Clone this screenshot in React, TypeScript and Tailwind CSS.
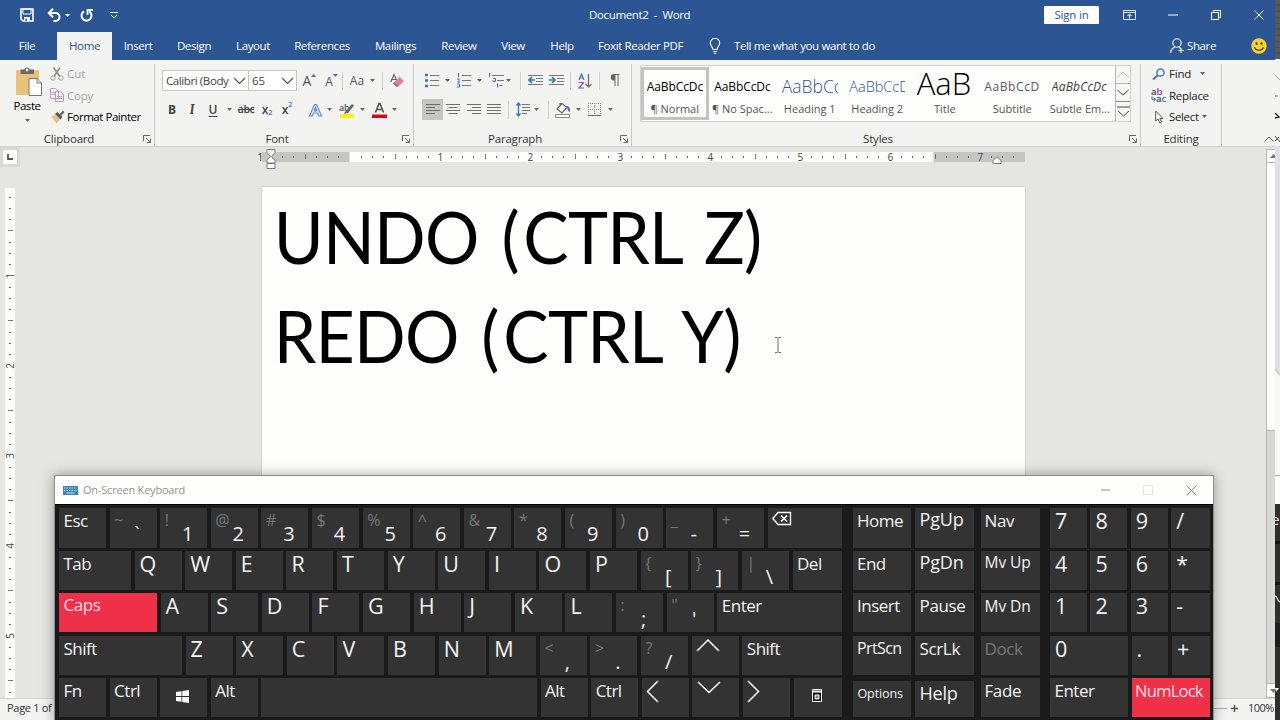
import type { ReactNode } from 'react';

type IconProps = { w: number; h: number; children: ReactNode; className?: string };

function Icon({ w, h, children, className = '' }: IconProps) {
    return (
        <svg
            width={w}
            height={h}
            viewBox={`0 0 ${w} ${h}`}
            fill="none"
            className={`shrink-0 ${className}`}
        >
            {children}
        </svg>
    );
}

function Cell({ className, children }: { className: string; children?: ReactNode }) {
    return (
        <div className={`flex shrink-0 items-center justify-center ${className}`}>
            {children}
        </div>
    );
}

function Caret({ className = '' }: { className?: string }) {
    return (
        <Icon w={5} h={3} className={className}>
            <path d="M0 0h5L2.5 3z" fill="#666" />
        </Icon>
    );
}

function Divider({ className = 'h-[18px]' }: { className?: string }) {
    return <div className={`w-px shrink-0 bg-[#cfcfcd] ${className}`} />;
}

function TitleBar() {
    return (
        <div className="flex h-8 items-center pb-[2px] text-white">
            <Cell className="ml-[19px] w-[16px]">
                <Icon w={14} h={14}>
                    <path d="M1 1h12v12H3l-2-2z" stroke="#fff" strokeWidth="1.600" />
                    <path d="M3 1h8v5H3z" stroke="#fff" strokeWidth="1" />
                    <path d="M4 9h6v4H4z" fill="#fff" />
                    <path d="M5.500 10.500h1.500V13H5.500z" fill="#2c5594" />
                </Icon>
            </Cell>
            <Cell className="ml-[12px] w-[14px]">
                <Icon w={14} h={14}>
                    <path d="M2 5h6.500a4 4 0 0 1 0 8H6.500" stroke="#fff" strokeWidth="2" />
                    <path d="M6 .8L1.800 5 6 9.200" stroke="#fff" strokeWidth="2" />
                </Icon>
            </Cell>
            <Icon w={5} h={3} className="ml-1">
                <path d="M0 0h5L2.500 3z" fill="#fff" />
            </Icon>
            <Cell className="ml-[10px] w-[13px]">
                <Icon w={13} h={14}>
                    <path d="M4 3.300A5 5 0 1 0 9 3.300" stroke="#fff" strokeWidth="2" />
                    <path d="M7.500 7V2H13" stroke="#fff" strokeWidth="1.800" />
                </Icon>
            </Cell>
            <Icon w={8} h={7} className="ml-[17px]">
                <path d="M0 .5h8M1 3l3 3 3-3" stroke="#fff" />
            </Icon>
            <div className="ml-[471px] w-[103px] text-[11.500px] tracking-[-0.350px] whitespace-pre">
                Document2  -  Word
            </div>
            <div className="ml-[352px] flex h-[18px] w-[55px] items-center justify-center rounded-[1px] bg-white text-[11.500px] tracking-[-0.200px] text-[#2c5594]">
                Sign in
            </div>
            <Icon w={13} h={10} className="ml-6">
                <path d="M.5.5h12v9H.500zM.5 2.500h12" stroke="#dfe7f3" />
                <path d="M6.500 8.500V4M4.500 6l2-2 2 2" stroke="#fff" />
            </Icon>
            <Icon w={10} h={2} className="ml-[32px]">
                <path d="M0 1h10" stroke="#fff" />
            </Icon>
            <Icon w={10} h={10} className="ml-[33px]">
                <path d="M.5 2.500h7v7h-7zM2.500 2.500v-2h7v7h-2" stroke="#fff" />
            </Icon>
            <Icon w={10} h={10} className="ml-[33px]">
                <path d="M.5.5l9 9M9.500.5l-9 9" stroke="#fff" />
            </Icon>
        </div>
    );
}

const tabs = [
    { label: 'File', width: 'w-[57px] pr-[3px]' },
    { label: 'Home', width: 'w-[55px]' },
    { label: 'Insert', width: 'w-[52px]' },
    { label: 'Design', width: 'w-[60px]' },
    { label: 'Layout', width: 'w-[58px]' },
    { label: 'References', width: 'w-[80px]' },
    { label: 'Mailings', width: 'w-[67px]' },
    { label: 'Review', width: 'w-[60px]' },
    { label: 'View', width: 'w-[48px]' },
    { label: 'Help', width: 'w-[50px]' },
    { label: 'Foxit Reader PDF', width: 'w-[107px]' },
];

function TabBar() {
    return (
        <div className="flex h-7 text-[11.500px] tracking-[-0.380px] text-white">
            {tabs.map((tab) => (
                <Cell
                    key={tab.label}
                    className={`pb-px whitespace-nowrap ${tab.width} ${
                        tab.label === 'Home' ? 'bg-[#f3f3f1] text-[#2c5594]' : ''
                    }`}
                >
                    {tab.label}
                </Cell>
            ))}
            <Cell className="ml-[14px] w-[14px]">
                <Icon w={12} h={16}>
                    <path
                        d="M4 11.500C4 9 1.300 8 1.300 5a4.700 4.700 0 0 1 9.400 0c0 3-2.700 4-2.700 6.500zM4.300 13.500h3.400M4.800 15.300h2.400"
                        stroke="#fff"
                        strokeWidth="1.100"
                    />
                </Icon>
            </Cell>
            <div className="ml-[12px] flex w-[150px] items-center pb-px whitespace-nowrap">
                Tell me what you want to do
            </div>
            <Cell className="ml-[285px] w-[17px]">
                <Icon w={15} h={16}>
                    <circle cx="7" cy="5" r="4.200" stroke="#fff" strokeWidth="1.100" />
                    <path
                        d="M.6 15c0-3.500 2-5 4.400-6M9 9l1.500 1.500M11 10v5M8.500 12.500h5"
                        stroke="#fff"
                        strokeWidth="1.100"
                    />
                </Icon>
            </Cell>
            <div className="flex w-[65px] items-center pb-px pl-px">Share</div>
            <Cell className="w-[16px] pb-px">
                <Icon w={16} h={16}>
                    <circle cx="8" cy="8" r="7.700" fill="#f7d22d" />
                    <ellipse cx="5.500" cy="5.500" rx="1" ry="1.600" fill="#4b3f16" />
                    <ellipse cx="10.500" cy="5.500" rx="1" ry="1.600" fill="#4b3f16" />
                    <path d="M3.500 9.200c1.500 4 7.500 4 9 0" stroke="#4b3f16" strokeWidth="1.100" />
                </Icon>
            </Cell>
        </div>
    );
}

type GroupProps = {
    label: string;
    className: string;
    launcher?: boolean;
    labelClass?: string;
    children: ReactNode;
};

function Group({ label, className, launcher = true, labelClass = '', children }: GroupProps) {
    return (
        <div className={`flex shrink-0 flex-col ${className}`}>
            <div className="flex flex-1">
                <div className="flex-1">{children}</div>
                <div className="mt-1 h-[68px] w-px bg-[#c9c9c7]" />
            </div>
            <div className="flex h-[14px] items-center border-r border-[#c9c9c7]">
                <div className={`flex-1 text-center tracking-[-0.200px] text-[#333] ${labelClass}`}>{label}</div>
                {launcher && (
                    <Icon w={8} h={8} className="mr-[3px]">
                        <path d="M.5 6V.5H7M3 3l4 4M7.500 3.500v4h-4" stroke="#666" />
                    </Icon>
                )}
            </div>
        </div>
    );
}

function Clipboard() {
    return (
        <Group label="Clipboard" className="w-[155px]" labelClass="pr-[5px]">
            <div className="flex">
                <div className="flex w-[50px] flex-col items-center pt-[7px] pl-[4px] text-black">
                    <Icon w={27} h={29} className="ml-[3px]">
                        <rect x="1" y="3" width="23" height="25" rx="1" fill="#e8c37a" />
                        <path d="M5.500 2.500H9a3.200 3.200 0 0 1 6 0h4V7h-13.500z" fill="#6b6b6b" />
                        <circle cx="12" cy="3" r="1.400" fill="#f3f3f1" />
                        <path d="M14 11.500h8l4.500 4.500v12.500H14z" fill="#fff" stroke="#777" />
                        <path d="M22 11.500V16h4.500" stroke="#777" />
                    </Icon>
                    <span className="mt-[1px] tracking-[-0.450px]">Paste</span>
                    <Caret className="mt-[5px]" />
                </div>
                <div className="flex flex-col pt-[3px]">
                    <div className="flex h-[21.500px] items-center text-[#a6a6a6]">
                        <Icon w={14} h={14} className="mr-[3px]">
                            <path d="M3.500.5l6.500 9M10 .5l-6 9" stroke="#8f8f8f" strokeWidth="1.700" />
                            <circle cx="3" cy="11" r="2.200" stroke="#a0a0a0" />
                            <circle cx="11" cy="11" r="2.200" stroke="#a0a0a0" />
                        </Icon>
                        Cut
                    </div>
                    <div className="flex h-[21.500px] items-center tracking-[-0.200px] text-[#a6a6a6]">
                        <Icon w={14} h={14} className="mr-[3px]">
                            <path d="M.5.5h5l3 3v7h-8zM5.500 3.500h5l3 3v7h-8z" fill="#f6f1f6" stroke="#b79fba" />
                            <path d="M2 4.500h3M2 6.500h3M7 8.500h5M7 10.500h5" stroke="#b79fba" />
                        </Icon>
                        Copy
                    </div>
                    <div className="flex h-[21.500px] items-center tracking-[-0.460px] text-black">
                        <Icon w={15} h={14} className="mr-[2px]">
                            <path d="M1 6l4-1 5 4-3.500 4.500z" fill="#ebbf83" />
                            <path d="M5 4l2.500-2 5 5-2 2.500z" fill="#555" />
                            <path d="M9.500 4L13 .8l1.500 1.500L11 6z" fill="#666" />
                        </Icon>
                        Format Painter
                    </div>
                </div>
            </div>
        </Group>
    );
}

function Combo({ value, className }: { value: string; className: string }) {
    return (
        <div
            className={`flex h-[21px] items-center justify-between overflow-hidden border border-[#c6c6c6] bg-white pr-0.5 pl-[3px] whitespace-nowrap text-[#444] ${className}`}
        >
            {value}
            <Icon w={13} h={8}>
                <path d="M1 1l5.500 5.500L12 1" stroke="#555" strokeWidth="1.200" />
            </Icon>
        </div>
    );
}

function FontGroup() {
    return (
        <Group label="Font" className="w-[259px]" labelClass="pr-[3px]">
            <div className="mt-[10px] flex h-[21px] items-center pl-[7px] text-[#555]">
                <Combo value="Calibri (Body" className="w-[87px] tracking-[-0.400px]" />
                <Combo value="65" className="-ml-px w-[49px]" />
                <Cell className="w-[24px] pl-px">
                    <span className="text-[14px]">A</span>
                    <Icon w={5} h={3} className="mb-[10px]">
                        <path d="M0 3h5L2.500 0z" fill="#3f6fb0" />
                    </Icon>
                </Cell>
                <Cell className="w-[21px]">
                    <span className="pt-0.5 text-[12px]">A</span>
                    <Icon w={5} h={3} className="mb-[10px]">
                        <path d="M0 0h5L2.500 3z" fill="#3f6fb0" />
                    </Icon>
                </Cell>
                <Divider />
                <Cell className="w-[39px] gap-1.5">
                    <span className="text-[12px]">Aa</span>
                    <Caret />
                </Cell>
                <Divider />
                <Cell className="w-[29px]">
                    <Icon w={15} h={15}>
                        <path d="M.8 9L4 1.500 7 8M2 6.500h4" stroke="#666" strokeWidth="1.200" />
                        <path d="M9.500 4l4.500 4-5 5-4.500-4z" fill="#e07f9c" />
                        <path d="M4.500 9L9 13l-2 1-4-3.500z" fill="#8b6a86" />
                    </Icon>
                </Cell>
            </div>
            <div className="mt-[8px] flex h-[21px] items-center pl-[7px] text-[12px] font-semibold text-[#444]">
                <Cell className="w-5 font-bold">B</Cell>
                <Cell className="w-5 font-serif text-[13px] italic">I</Cell>
                <Cell className="w-[22px] underline underline-offset-2">U</Cell>
                <Cell className="w-[11px]"><Caret /></Cell>
                <Cell className="w-[22px] text-[10.500px] tracking-[-0.5px] line-through">abc</Cell>
                <Cell className="w-[20px]">
                    x<span className="mt-[7px] text-[7px] text-[#3f6fb0]">2</span>
                </Cell>
                <Cell className="w-[20px]">
                    x<span className="mb-[8px] text-[7px] text-[#3f6fb0]">2</span>
                </Cell>
                <Divider className="ml-[4px]" />
                <Cell className="w-[25px] pl-[2px]">
                    <Icon w={15} h={14}>
                        <path
                            d="M1.500 13L6.500 1.500h2l5 11.500h-2.800L9.600 10H5.400L4.300 13zM6.300 7.800h2.500L7.500 4.500z"
                            fill="#eef4fb"
                            stroke="#5f8fcb"
                            strokeWidth="1.200"
                        />
                    </Icon>
                </Cell>
                <Caret />
                <Cell className="w-[28px] pl-[2px]">
                    <Icon w={16} h={16}>
                        <text x="0" y="8.500" fontSize="9" letterSpacing="-0.3" fill="#555">ab</text>
                        <path d="M6 10l7-8 2 1.500-6 7.500-4 1z" fill="#666" />
                        <path d="M1 12h14v4H1z" fill="#fff200" />
                    </Icon>
                </Cell>
                <Caret />
                <Cell className="w-[27px] pl-px">
                    <Icon w={15} h={16}>
                        <path d="M3.500 10.500L7 1.500h1l3.500 9M5 7.500h5" stroke="#555" strokeWidth="1.600" />
                        <path d="M0 12.500h15v3.500H0z" fill="#c90c16" />
                    </Icon>
                </Cell>
                <Caret />
            </div>
        </Group>
    );
}

function Lines({ d }: { d: string }) {
    return (
        <Icon w={14} h={11}>
            <path d={d} stroke="#6d6d6d" />
        </Icon>
    );
}

function ParagraphGroup() {
    return (
        <Group label="Paragraph" className="w-[218px]" labelClass="pr-[4px]">
            <div className="mt-[10px] flex h-[21px] items-center pl-[11px]">
                <Icon w={14} h={15}>
                    <path d="M0 2h3M0 7.500h3M0 13h3" stroke="#3f6fb0" strokeWidth="2.500" />
                    <path d="M5 2.500h9M5 7.500h9M5 12.500h9" stroke="#777" />
                </Icon>
                <Caret className="ml-[6px]" />
                <Icon w={14} h={15} className="ml-[7px]">
                    <path d="M1.500 0v4M0 6h2v1.500L.5 9H3M0 11h2.500v3H0" stroke="#3f6fb0" />
                    <path d="M5 2.500h9M5 7.500h9M5 12.500h9" stroke="#777" />
                </Icon>
                <Caret className="ml-[6px]" />
                <Icon w={17} h={15} className="ml-[6px]">
                    <path d="M1.500 0v4M5 5.500h2.500v3H5v-1.500M9.500 10.500v4" stroke="#3f6fb0" />
                    <path d="M4 2.500h12M9 7.500h7M11.500 12.500h3" stroke="#777" />
                </Icon>
                <Caret className="ml-px" />
                <Divider className="ml-[9px] h-[18px]" />
                <Cell className="w-[28px]">
                    <Icon w={15} h={13}>
                        <path d="M0 1.500h15M8 4.500h7M8 7.500h7M0 10.500h15" stroke="#777" />
                        <path d="M7 6H1.500M4 3L1 6l3 3" stroke="#3f6fb0" strokeWidth="1.700" />
                    </Icon>
                </Cell>
                <Cell className="w-[14px]">
                    <Icon w={15} h={13}>
                        <path d="M0 1.500h15M8 4.500h7M8 7.500h7M0 10.500h15" stroke="#777" />
                        <path d="M0 6h5.500M3 3l3 3-3 3" stroke="#3f6fb0" strokeWidth="1.700" />
                    </Icon>
                </Cell>
                <Divider className="ml-[7px] h-[18px]" />
                <Cell className="w-[28px]">
                    <Icon w={14} h={16}>
                        <path d="M1 7l2.500-6L6 7M2 5h3" stroke="#3f6fb0" strokeWidth="1.200" />
                        <path d="M1 9.500h4.500L1 15h5" stroke="#9350a8" strokeWidth="1.200" />
                        <path d="M10.500 1v13M7.500 11l3 3 3-3" stroke="#666" strokeWidth="1.200" />
                    </Icon>
                </Cell>
                <Divider />
                <Cell className="w-[29px]">
                    <Icon w={10} h={13}>
                        <path d="M4 .5h5.500M5 0v12M8 0v12" stroke="#666" />
                        <path d="M5 0H4a3.300 3.300 0 0 0 0 6.600h1z" fill="#666" />
                    </Icon>
                </Cell>
            </div>
            <div className="mt-[8px] flex h-[21px] items-center pl-[8px]">
                <Cell className="h-[21px] w-[21px] bg-[#c5c5c3]">
                    <Lines d="M0 .5h14M0 3.500h9M0 6.500h14M0 9.500h9" />
                </Cell>
                <Cell className="w-[20px]">
                    <Lines d="M0 .5h14M2.500 3.500h9M0 6.500h14M2.500 9.500h9" />
                </Cell>
                <Cell className="w-[21px]">
                    <Lines d="M0 .5h14M5 3.500h9M0 6.500h14M5 9.500h9" />
                </Cell>
                <Cell className="w-[20px]">
                    <Lines d="M0 .5h14M0 3.500h14M0 6.500h14M0 9.500h14" />
                </Cell>
                <Divider className="ml-[4px] h-[18px]" />
                <Icon w={14} h={15} className="ml-[7px]">
                    <path d="M2.500 1v13M.5 3.500l2-2.500 2 2.500M.5 11.500l2 2.500 2-2.500" stroke="#3f6fb0" strokeWidth="1.300" />
                    <path d="M6 2.500h8M6 5.500h8M6 8.500h8M6 11.500h5" stroke="#777" />
                </Icon>
                <Caret className="ml-[4px]" />
                <Divider className="ml-[9px] h-[18px]" />
                <Icon w={16} h={16} className="ml-[6px]">
                    <path d="M7 1.500L2 7l5 4 5-5.500zM5 4V1.500h2.500" stroke="#666" strokeWidth="1.200" />
                    <path d="M11 4c3 0 4.500 2 4 6-1.500 0-2-1.500-2.500-3.500z" fill="#3f6fb0" />
                    <path d="M.5 12.500h14v3H.500z" fill="#fff" stroke="#888" />
                </Icon>
                <Caret className="ml-[5px]" />
                <Icon w={13} h={13} className="ml-[7px]">
                    <path d="M.5 0v12M6.500 0v12M12.500 0v12M0 .5h13M0 6.500h13" stroke="#888" strokeDasharray="1 1" />
                    <path d="M0 12.500h13" stroke="#666" />
                </Icon>
                <Caret className="ml-[7px]" />
            </div>
        </Group>
    );
}

const styleCards = [
    { name: '¶ Normal', sample: 'text-[12px] tracking-[-0.100px] text-black' },
    { name: '¶ No Spac...', sample: 'text-[12px] tracking-[-0.100px] text-black' },
    { name: 'Heading 1', sample: 'text-[17.500px] font-light text-[#2f5496]' },
    { name: 'Heading 2', sample: 'text-[14.500px] font-light text-[#2f5496]' },
    { name: 'Title', sample: 'text-[31px] font-light leading-none pb-[7px] text-black' },
    { name: 'Subtitle', sample: 'text-[12px] tracking-[0.600px] text-[#5a5a5a]' },
    { name: 'Subtle Em...', sample: 'text-[12px] italic tracking-[0.200px] text-[#404040]' },
];

function StylesGroup() {
    return (
        <Group label="Styles" className="w-[509px]" labelClass="pr-[5px]">
            <div className="mt-[5px] ml-[8px] flex h-[57px] w-[491px] border border-[#d2d2d0] bg-[#fdfdfb]">
                {styleCards.map((card, i) => (
                    <div
                        key={card.name}
                        className={`flex w-[67.500px] shrink-0 flex-col items-center ${
                            i === 0 ? 'mt-[1px] h-[53px] border-[3px] border-[#c3c3c1]' : 'pt-[4px]'
                        }`}
                    >
                        <div
                            className={`flex h-[33px] w-[56px] items-center overflow-hidden whitespace-nowrap ${card.sample}`}
                        >
                            {card.name === 'Title' ? 'AaB' : 'AaBbCcDc'}
                        </div>
                        <div className="mt-[-2px] text-[11px] leading-[16px] whitespace-nowrap text-[#555]">
                            {card.name}
                        </div>
                    </div>
                ))}
                <div className="ml-auto flex w-[15px] shrink-0 flex-col border-l border-[#b5b5b3] bg-[#f6f6f4]">
                    <Cell className="h-[18px] border-b border-[#b5b5b3]">
                        <Icon w={12} h={7}><path d="M.5 6L6 1l5.500 5" stroke="#c0c0c0" /></Icon>
                    </Cell>
                    <Cell className="h-[18px] border-b border-[#888]">
                        <Icon w={12} h={7}><path d="M.5 1L6 6l5.500-5" stroke="#444" /></Icon>
                    </Cell>
                    <Cell className="flex-1">
                        <Icon w={13} h={12}>
                            <path d="M0 1h13M1 5l5.500 5L12 5" stroke="#444" />
                        </Icon>
                    </Cell>
                </div>
            </div>
        </Group>
    );
}

function EditingGroup() {
    return (
        <Group label="Editing" className="w-[81px]" launcher={false}>
            <div className="flex flex-col pt-[3px] pl-[10px] text-[#222]">
                <div className="flex h-[21.500px] items-center tracking-[-0.200px]">
                    <Icon w={13} h={12} className="mr-[4px] ml-px">
                        <circle cx="8.500" cy="4.500" r="3.600" stroke="#4a78b5" strokeWidth="1.500" />
                        <path d="M6 7L1 11.500" stroke="#4a78b5" strokeWidth="2.200" />
                    </Icon>
                    Find
                    <Caret className="ml-[9px]" />
                </div>
                <div className="flex h-[21.500px] items-center">
                    <Icon w={16} h={17} className="mr-[2px]">
                        <text x="0" y="8" fontSize="9.500" fontWeight="600" fill="#444">a</text>
                        <text x="5.500" y="8" fontSize="9.500" fontWeight="600" fill="#8a4aa0">b</text>
                        <text x="5" y="15" fontSize="9.500" fontWeight="600" fill="#444">a</text>
                        <text x="10.500" y="15" fontSize="9.500" fontWeight="600" fill="#3f6fb0">c</text>
                        <path d="M1 9.500v3h3M2.500 10.500l2 2-2 2" stroke="#3f6fb0" />
                    </Icon>
                    <span className="tracking-[-0.300px]">Replace</span>
                </div>
                <div className="flex h-[21.500px] items-center">
                    <Icon w={9} h={14} className="mr-[5px] ml-[4px]">
                        <path d="M.7 1v10l2.300-2 1.800 4 1.700-.800L4.800 8.500H8z" fill="#fff" stroke="#555" />
                    </Icon>
                    <span className="tracking-[-0.350px]">Select</span>
                    <Caret className="ml-[3px]" />
                </div>
            </div>
        </Group>
    );
}

function Ribbon() {
    return (
        <div className="flex h-[87px] border-b border-[#d2d2d0] bg-[#f3f3f1] pb-[1px] text-[11.500px]">
            <Clipboard />
            <FontGroup />
            <ParagraphGroup />
            <StylesGroup />
            <EditingGroup />
            <Icon w={10} h={6} className="mb-[3px] ml-[42px] self-end">
                <path d="M.5 5.500L5 1l4.500 4.500" stroke="#555" />
            </Icon>
        </div>
    );
}

// Eighth-inch marks: whole inches carry a number, half inches a longer stroke.
function Mark({ step, vertical = false }: { step: number; vertical?: boolean }) {
    if (step % 8 === 0) {
        if (step === 0) return null;
        return (
            <span className={`text-[10px] leading-none text-[#444] ${vertical ? '-rotate-90' : ''}`}>
                {Math.abs(step / 8)}
            </span>
        );
    }
    if (step % 4 === 0) {
        return <span className={`bg-[#777] ${vertical ? 'h-px w-[5px]' : 'h-[5px] w-px'}`} />;
    }
    return <span className={`bg-[#666] ${vertical ? 'h-px w-[2px]' : 'h-[1.500px] w-px'}`} />;
}

function HorizontalRuler() {
    const steps = Array.from({ length: 68 }, (_, i) => i - 8);
    return (
        <div className="relative ml-[262px] h-[9.500px] w-[763px] bg-[linear-gradient(to_right,#c5c5c3_87px,#fdfdfb_88px,#fdfdfb_671px,#c5c5c3_672px)]">
            <div className="-ml-[7.400px] flex h-full">
                {steps.map((step) => (
                    <Cell key={step} className="w-[11.250px]">
                        <Mark step={step} />
                    </Cell>
                ))}
            </div>
            <svg width="10" height="21" viewBox="0 0 10 21" className="absolute -top-[3px] left-[4px]">
                <path
                    d="M1 .5h8v3L5.500 7.500 9 11v3H1v-3l3.500-3.500L1 3.500zM1 14.500h8v5H1z"
                    fill="#fff"
                    stroke="#777"
                />
            </svg>
            <svg width="10" height="8" viewBox="0 0 10 8" className="absolute top-[4px] left-[730px]">
                <path d="M5 .7l4 3.800v3H1v-3z" fill="#fff" stroke="#777" />
            </svg>
        </div>
    );
}

function VerticalRuler() {
    const steps = Array.from({ length: 45 }, (_, i) => i + 1);
    return (
        <div className="mt-[21px] ml-[5px] flex h-[511px] w-[10px] flex-col overflow-hidden bg-[#fdfdfb] pt-[3.500px]">
            {steps.map((step) => (
                <Cell key={step} className="h-[11.250px]">
                    <Mark step={step} vertical />
                </Cell>
            ))}
        </div>
    );
}

function ScrollBar() {
    return (
        <div className="mt-[2px] flex h-[549px] w-[14px] flex-col border-l border-[#b5b5b3] bg-[#d8d9d6]">
            <div className="flex h-[14px] items-center border-y border-[#b5b5b3] bg-white pl-[3px]">
                <Icon w={7} h={4}><path d="M0 4h7L3.500 0z" fill="#777" /></Icon>
            </div>
            <div className="h-[268px] border-b border-[#b5b5b3] bg-white" />
            <div className="mt-auto flex h-[15px] items-center border-y border-[#b5b5b3] bg-white pl-[3px]">
                <Icon w={7} h={4}><path d="M0 0h7L3.500 4z" fill="#777" /></Icon>
            </div>
        </div>
    );
}

// The opening bracket needs extra room after it.
function Heading({ word, keys }: { word: string; keys: string }) {
    return (
        <p className="w-[500px] origin-left scale-x-[0.95] pl-[5px] leading-[104px] whitespace-nowrap">
            {word} <span className="tracking-[4px]">(</span>
            {keys})
        </p>
    );
}

function Workspace() {
    return (
        <div className="flex h-[551px] bg-[#e5e6e2]">
            <div className="flex w-[20px] shrink-0 flex-col">
                <div className="flex h-[20px] w-[20px] items-center justify-center bg-[#d8d9d6]">
                    <div className="flex h-[14px] w-[14px] items-center justify-center bg-[#fdfdfb]">
                        <Icon w={6} h={6}><path d="M1 0v5h5" stroke="#555" strokeWidth="1.800" /></Icon>
                    </div>
                </div>
                <VerticalRuler />
            </div>
            <div className="-ml-[20px] w-[1266px] shrink-0 pt-[5px]">
                <HorizontalRuler />
                <div className="mt-[24.500px] ml-[261px] h-[512px] w-[765px] border border-[#d2d3d0] bg-[#fefefc] font-['Lato',sans-serif] text-black">
                    <div className="-mt-[3px] pl-[7px] text-[71.500px] tracking-[-0.800px] [word-spacing:6.500px]">
                        <div className="h-[99px]">
                            <Heading word="UNDO" keys="CTRL Z" />
                        </div>
                        <div className="flex h-[99px]">
                            <Heading word="REDO" keys="CTRL Y" />
                            <Icon w={8} h={16} className="mt-[54px] ml-[5px]">
                                <path d="M1 .5h2.500M4.500.5H7M4 1v14M1 15.500h2.500M4.500 15.500H7" stroke="#666" />
                            </Icon>
                        </div>
                    </div>
                </div>
            </div>
            <ScrollBar />
        </div>
    );
}

function StatusBar() {
    return (
        <div className="flex h-[22px] items-center border-t border-[#d2d2d0] bg-[#f3f3f1] pb-[2px] text-[11px] tracking-[-0.300px] text-[#333]">
            <span className="ml-[7px] w-[1206px] whitespace-nowrap">Page 1 of</span>
            <div className="h-px w-[14px] bg-[#aaa]" />
            <Icon w={7} h={7} className="ml-[4px]"><path d="M0 3.500h7M3.500 0v7" stroke="#555" strokeWidth="1.500" /></Icon>
            <span className="ml-[10px] tracking-[-0.500px]">100%</span>
        </div>
    );
}

type KeyProps = {
    label?: ReactNode;
    shift?: string;
    w?: string;
    size?: string;
    active?: boolean;
    dim?: boolean;
};

function Key({ label, shift, w = 'w-[47px]', size = 'text-[17px] tracking-[-0.500px]', active, dim }: KeyProps) {
    return (
        <div
            className={`flex h-full shrink-0 pl-[4.500px] leading-[25px] whitespace-nowrap ${w} ${
                active ? 'bg-[#ee3048] text-[#ffdfe3]' : 'bg-[#333]'
            } ${dim ? 'text-[#777]' : ''}`}
        >
            {shift && <span className="w-[16px] text-[16px] text-[#777]">{shift}</span>}
            <span className={shift ? 'mt-[13px] w-[14px] text-center text-[20px]' : size}>{label}</span>
        </div>
    );
}

const letter = 'pl-[0.500px] text-[21.500px]';

function Letters({ text }: { text: string }) {
    return (
        <>
            {text.split('').map((ch) => (
                <Key key={ch} label={ch} size={letter} />
            ))}
        </>
    );
}

function KeyRow({ children, className = 'h-[39px]' }: { children: ReactNode; className?: string }) {
    return <div className={`flex gap-[3.620px] ${className}`}>{children}</div>;
}

function Chevron({ d }: { d: string }) {
    return (
        <Icon w={24} h={24} className="mt-[2px]">
            <path d={d} stroke="#fff" strokeWidth="1.500" />
        </Icon>
    );
}

const numberRow = ['~`', '!1', '@2', '#3', '$4', '%5', '^6', '&7', '*8', '(9', ')0', '_-', '+='];

function MainKeys() {
    return (
        <div className="flex w-[783px] flex-col gap-[3.400px]">
            <KeyRow className="h-[39.500px]">
                <Key label="Esc" />
                {numberRow.map((k) => (
                    <Key key={k} shift={k[0]} label={k[1]} />
                ))}
                <Key
                    w="flex-1"
                    label={
                        <Icon w={20} h={15} className="mt-[3px]">
                            <path d="M6 1.500h12.500v12H6L.8 7.500z" stroke="#fff" strokeWidth="1.400" />
                            <path d="M9 4.500l6 6M15 4.500l-6 6" stroke="#fff" strokeWidth="1.700" />
                        </Icon>
                    }
                />
            </KeyRow>
            <KeyRow>
                <Key label="Tab" w="w-[72px]" />
                <Letters text="QWERTYUIOP" />
                <Key shift="{" label="[" />
                <Key shift="}" label="]" />
                <Key shift="|" label="\" />
                <Key label="Del" w="flex-1" />
            </KeyRow>
            <KeyRow>
                <Key label="Caps" w="w-[98px]" size="text-[17px] leading-[23px] tracking-[-0.400px]" active />
                <Letters text="ASDFGHJKL" />
                <Key shift=":" label=";" />
                <Key shift={'"'} label="'" />
                <Key label="Enter" w="flex-1" />
            </KeyRow>
            <KeyRow>
                <Key label="Shift" w="w-[123px]" />
                <Letters text="ZXCVBNM" />
                <Key shift="<" label="," />
                <Key shift=">" label="." />
                <Key shift="?" label="/" />
                <Key label={<Chevron d="M1 13L12 2l11 11" />} />
                <Key label="Shift" w="flex-1" />
            </KeyRow>
            <KeyRow>
                <Key label="Fn" />
                <Key label="Ctrl" />
                <Key
                    label={
                        <Icon w={13} h={13} className="mt-[12px] ml-[11px]">
                            <path d="M0 2l5.500-.800V6H0zM6.300 1L13 0v6H6.300zM0 7h5.500v4.800L0 11zM6.300 7H13v6l-6.700-1z" fill="#fff" />
                        </Icon>
                    }
                />
                <Key label="Alt" />
                <Key w="w-[275.500px]" />
                <Key label="Alt" />
                <Key label="Ctrl" />
                <Key label={<Chevron d="M12 1L1.500 11.500 12 22" />} />
                <Key label={<Chevron d="M1 2l11 10.500L23 2" />} />
                <Key label={<Chevron d="M1 1l10.500 10.500L1 22" />} />
                <Key
                    w="flex-1"
                    label={
                        <Icon w={10} h={13} className="mt-[11px] ml-[14px]">
                            <path d="M.5.5h9v12h-9z" fill="#111" stroke="#fff" />
                            <path d="M0 2.500h10" stroke="#fff" strokeWidth="2" />
                            <path d="M3 6h4v4H3z" fill="#888" stroke="#fff" />
                        </Icon>
                    }
                />
            </KeyRow>
        </div>
    );
}

const navRows = [
    ['Home', 'PgUp'],
    ['End', 'PgDn'],
    ['Insert', 'Pause'],
    ['PrtScn', 'ScrLk'],
];

function NavKeys() {
    return (
        <div className="ml-[11px] flex w-[120.500px] flex-col gap-[3.400px]">
            {navRows.map(([a, b], i) => (
                <KeyRow key={a} className={i === 0 ? 'h-[39.500px]' : 'h-[39px]'}>
                    <Key
                        label={a}
                        w="flex-1"
                        size={a === 'PrtScn' ? '-ml-[0.500px] text-[16px] tracking-[-0.600px]' : '-ml-[0.500px] text-[17px] tracking-[-0.500px]'}
                    />
                    <Key
                        label={b}
                        w="w-[58.500px]"
                        size={i < 2 ? 'text-[18px] leading-[23px] tracking-[-0.150px]' : 'text-[17px] tracking-[-0.350px]'}
                    />
                </KeyRow>
            ))}
            <KeyRow className="h-[39px] pt-[3px]">
                <Key label="Options" w="flex-1" size="text-[12.500px] tracking-[-0.100px]" />
                <Key label="Help" w="w-[58.500px]" size="text-[18px] tracking-[-0.200px]" />
            </KeyRow>
        </div>
    );
}

function WindowKeys() {
    const label = '-ml-px text-[17px] tracking-[-0.400px]';
    return (
        <div className="ml-[7.500px] flex w-[58.500px] flex-col gap-[3.400px]">
            <KeyRow className="h-[39.500px]"><Key label="Nav" w="flex-1" size={label} /></KeyRow>
            <KeyRow><Key label="Mv Up" w="flex-1" size="-ml-px text-[15.500px] leading-[23px] tracking-[-0.050px]" /></KeyRow>
            <KeyRow><Key label="Mv Dn" w="flex-1" size="-ml-px text-[15.500px] leading-[27px] tracking-[-0.050px]" /></KeyRow>
            <KeyRow><Key label="Dock" w="flex-1" size={label} dim /></KeyRow>
            <KeyRow><Key label="Fade" w="flex-1" size={label} /></KeyRow>
        </div>
    );
}

function NumberPad() {
    return (
        <div className="ml-[10.500px] flex w-[160px] flex-col gap-[3.400px]">
            {['789/', '456*', '123-'].map((row, i) => (
                <KeyRow key={row} className={i === 0 ? 'h-[39.500px]' : 'h-[39px]'}>
                    {row.split('').map((ch, n) => (
                        <Key key={ch} label={ch} w={n === 3 ? 'flex-1' : 'w-[36.800px]'} size={letter} />
                    ))}
                </KeyRow>
            ))}
            <KeyRow>
                <Key label="0" w="w-[78px]" size={letter} />
                <Key label="." w="w-[36.800px]" size={letter} />
                <Key label="+" w="flex-1" size={letter} />
            </KeyRow>
            <KeyRow>
                <Key label="Enter" w="w-[78px]" />
                <Key label="NumLock" w="flex-1" size="-ml-px text-[16.500px] tracking-[-0.750px]" active />
            </KeyRow>
        </div>
    );
}

function OnScreenKeyboard() {
    return (
        <div className="absolute top-[475px] left-[54px] h-[250px] w-[1160px] border border-[#8d8d8b] bg-[#1a1a1a] text-[#f4f4f4] shadow-[0_0_12px_rgba(0,0,0,0.35)]">
            <div className="flex h-[28px] items-center bg-[#fefefc] text-[11px] text-[#949494]">
                <Icon w={15} h={9} className="ml-[8px]">
                    <path d="M0 0h15v9H0z" fill="#3a84b8" />
                    <path d="M1 2h13M1 4.500h13" stroke="#cfe5f3" strokeDasharray="1.500 1" />
                    <path d="M3.500 7h8" stroke="#cfe5f3" />
                </Icon>
                <span className="ml-[5px] w-[1018px] tracking-[-0.200px]">On-Screen Keyboard</span>
                <Icon w={9} h={2}><path d="M0 1h9" stroke="#8f8f8f" /></Icon>
                <Icon w={10} h={10} className="ml-[33px]"><path d="M.5.5h9v9h-9z" stroke="#e4e4e4" /></Icon>
                <Icon w={11} h={11} className="ml-[33px]"><path d="M.5.5l10 10M10.500.5l-10 10" stroke="#888" /></Icon>
            </div>
            <div className="flex border-t border-black pt-[3px] pl-[4px]">
                <MainKeys />
                <NavKeys />
                <WindowKeys />
                <NumberPad />
            </div>
        </div>
    );
}

// Sliver of the neighbouring desktop along the right border.
function EdgeSliver() {
    return (
        <div className="absolute top-0 right-0 flex h-[720px] w-[5px] flex-col overflow-hidden">
            <div className="h-[59px] bg-[repeating-linear-gradient(to_bottom,#3c6b5c_0px,#6a4a66_2px,#54603c_4px,#3d4a7c_6px)]" />
            <div className="flex h-[87px] flex-col bg-[#f3f3f1]">
                <Icon w={5} h={7} className="mt-[15px]"><path d="M0 1l5 5" stroke="#999" /></Icon>
                <Icon w={5} h={3} className="mt-[13px]"><path d="M0 2h3" stroke="#4a9aa8" /></Icon>
                <Icon w={5} h={7} className="mt-[16px]"><path d="M0 0l4 4-4 1" stroke="#222" strokeWidth="1.500" /></Icon>
                <Icon w={5} h={8} className="mt-[15px]"><path d="M0 1l5 6M0 6l4-4" stroke="#444" /></Icon>
            </div>
            <div className="h-[223px] bg-[#e1e1e2]" />
            <div className="flex h-[107px] flex-col justify-between border-b border-[#aaa] bg-[#f8f8f7]">
                <Icon w={5} h={8}><path d="M0 0l5 6V0z" fill="#e1e1e2" /><path d="M0 0l5 6" stroke="#aaa" /></Icon>
            </div>
            <div className="h-[28px] bg-[#fefefc]" />
            <div className="flex flex-1 flex-col bg-[#302f2d] text-[15px] leading-[20px] text-[#e8e8e8]">
                <span className="mt-[5px] -ml-[4px]">e</span>
                <div className="mt-[12px] h-[3px] bg-[#161616]" />
                <div className="mt-[38px] h-[3px] bg-[#161616]" />
                <Icon w={5} h={9} className="mt-[9px]"><path d="M0 2c3 0 1 4 5 6" stroke="#ddd" strokeWidth="1.500" /></Icon>
                <div className="mt-[20px] h-[24px] bg-[#1d1d1d]" />
                <Icon w={5} h={4} className="mt-[41px]"><path d="M0 0h4L1 4z" fill="#fff" /></Icon>
            </div>
        </div>
    );
}

export default function App() {
    return (
        <div className="relative h-[720px] w-[1280px] overflow-hidden bg-[#e5e6e2] font-['Open_Sans','Noto_Sans',sans-serif]">
            <div className="bg-[#2c5594]">
                <TitleBar />
                <TabBar />
            </div>
            <Ribbon />
            <Workspace />
            <StatusBar />
            <OnScreenKeyboard />
            <EdgeSliver />
        </div>
    );
}
